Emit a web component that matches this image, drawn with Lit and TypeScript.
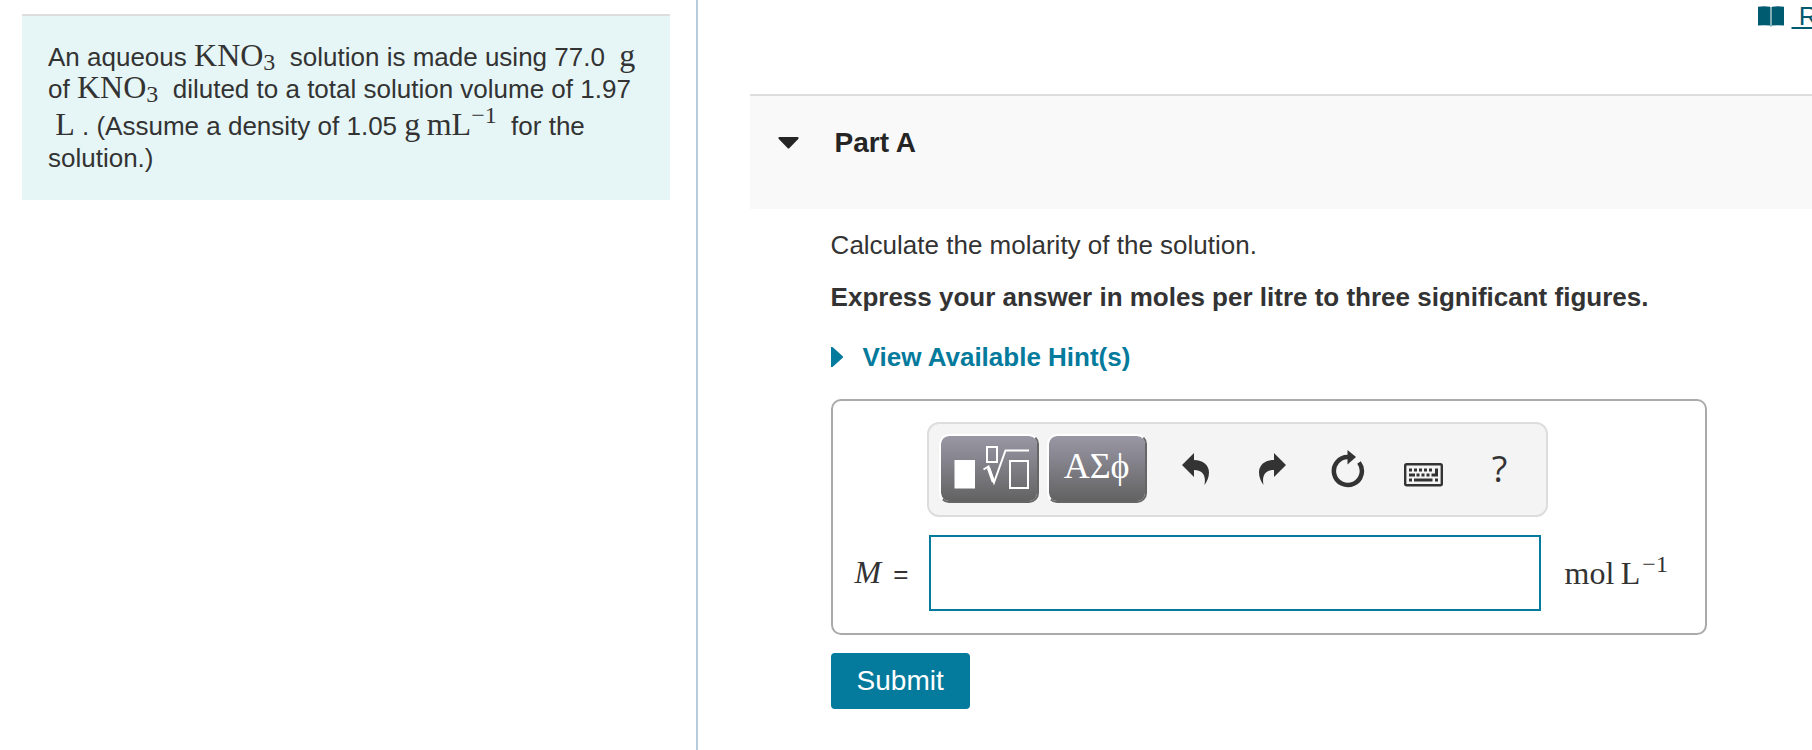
import { LitElement, html, css } from "lit";
import { customElement, state } from "lit/decorators.js";

@customElement("problem-statement")
class ProblemStatement extends LitElement {
  static styles = css`
    :host {
      display: block;
    }
    .card {
      margin: 0;
      padding: 25px 26px 26px;
      border-top: 2px solid #dddddd;
      background: #e6f6f6;
      color: #333333;
      font-size: 26px;
      line-height: 32px;
    }
    .text {
      margin: 0;
    }
    .math {
      font-family: "Liberation Serif", serif;
      font-size: 32px;
      line-height: 24px;
      white-space: nowrap;
    }
    sub,
    sup {
      font-size: 24px;
    }
    sub {
      line-height: 8px;
      vertical-align: -4px;
    }
    sup {
      line-height: 20px;
      vertical-align: 12px;
    }
  `;

  render() {
    const kno3 = html`<span class="math">KNO<sub>3</sub></span>`;
    return html`
      <section class="card">
        <p class="text">
          An aqueous ${kno3}&nbsp; solution is made using 77.0&nbsp;
          <span class="math">g</span> of ${kno3}&nbsp; diluted to a total
          solution volume of 1.97 &nbsp;<span class="math">L</span>&nbsp;.
          (Assume a density of 1.05
          <span class="math">g&#8201;mL<sup>−1</sup></span>&nbsp; for the
          solution.)
        </p>
      </section>
    `;
  }
}

@customElement("math-toolbar")
class MathToolbar extends LitElement {
  static styles = css`
    :host {
      display: block;
    }
    .bar {
      display: inline-flex;
      align-items: center;
      box-sizing: border-box;
      padding: 10px 8px 12px 10px;
      border: 2px solid #dddddd;
      border-radius: 12px;
      background: #f4f4f4;
    }
    button {
      display: flex;
      align-items: center;
      justify-content: center;
      box-sizing: border-box;
      height: 69px;
      padding: 0;
      border: 0;
      background: none;
      color: #333333;
      cursor: pointer;
    }
    .key {
      width: 100px;
      margin-right: 8px;
      border: 2px solid #666666;
      border-top-color: #ffffff;
      border-left-color: #ffffff;
      border-radius: 10px;
      background: linear-gradient(#9a97a5, #626262) padding-box;
      color: #ffffff;
    }
    .greek {
      padding-bottom: 6px;
      font: 36px/40px "Liberation Serif", serif;
    }
    .tool {
      width: 76px;
    }
    .key + .tool {
      margin-left: 3px;
    }
    .help {
      font: 36px/44px "Open Sans", "Noto Sans", sans-serif;
    }
    svg {
      display: block;
    }
  `;

  render() {
    return html`
      <div class="bar" role="toolbar" aria-label="Math tools">
        <button class="key" type="button" aria-label="Templates">
          <svg width="96" height="65" viewBox="0 0 96 65" fill="none" stroke="#fff" stroke-width="2">
            <rect x="13.500" y="24" width="20.500" height="28.500" fill="#fff" stroke="none" />
            <rect x="46" y="11" width="10" height="15" />
            <path d="M42.500 33.500l5-3 5.500 16 11.500-32h23.500" />
            <path d="M47.500 32l5 14" stroke-width="3.500" />
            <rect x="69" y="25" width="18" height="27" />
          </svg>
        </button>
        <button class="key greek" type="button" aria-label="Symbols">ΑΣϕ</button>
        <button class="tool" type="button" aria-label="Undo">
          <svg width="28" height="32" viewBox="0 0 28 32" fill="currentColor">
            <path d="M0 12L12 0v7C21 7 27 12 27 19.500c0 5-2 9-4.500 12.500C24.500 22 20 17 12 17v7z" />
          </svg>
        </button>
        <button class="tool" type="button" aria-label="Redo">
          <svg width="28" height="32" viewBox="0 0 28 32" fill="currentColor">
            <path d="M28 12L16 0v7C7 7 1 12 1 19.500c0 5 2 9 4.500 12.500C3.500 22 8 17 16 17v7z" />
          </svg>
        </button>
        <button class="tool" type="button" aria-label="Reset">
          <svg width="34" height="38" viewBox="0 0 34 38">
            <path d="M28 12.500A14 14 0 1 1 17 7" fill="none" stroke="currentColor" stroke-width="4.500" />
            <path d="M16.500 0l8.500 7L16.500 14.500z" fill="currentColor" />
          </svg>
        </button>
        <button class="tool" type="button" aria-label="Keyboard shortcuts">
          <svg width="39" height="36" viewBox="0 0 39 36" fill="currentColor">
            <rect x="1.200" y="13.200" width="36.600" height="21" rx="1.500" fill="none" stroke="currentColor" stroke-width="2.400" />
            <path d="M5 17.500h3v3H5zM10 17.500h3v3h-3zM15 17.500h3v3h-3zM20 17.500h3v3h-3zM25 17.500h3v3h-3z" />
            <path d="M5 22.500h6v3H5zM12.500 22.500h3v3h-3zM17.500 22.500h3v3h-3zM22.500 22.500h3v3h-3zM27.500 22.500H31v-5h3v8h-6.500z" />
            <path d="M5 27.500h3v3H5zM10 27.500h18.500v3H10zM31 27.500h3v3h-3z" />
          </svg>
        </button>
        <button class="tool help" type="button" aria-label="Help">?</button>
      </div>
    `;
  }
}

@customElement("app-root")
class AppRoot extends LitElement {
  static styles = css`
    :host {
      display: block;
      color: #333333;
      font: 26px/32px "Liberation Sans", Arial, sans-serif;
    }
    .page {
      display: flex;
      min-height: 100vh;
      overflow: hidden;
      background: #ffffff;
    }
    .left {
      flex: 0 0 auto;
      box-sizing: border-box;
      width: 38.5%;
      padding: 14px 26px 0 22px;
      border-right: 2px solid #b8cbdc;
    }
    .right {
      flex: 1 1 0;
      min-width: 0;
      padding-left: 52px;
    }
    /* The link row runs on past the window's right edge. */
    .links {
      display: flex;
      justify-content: flex-end;
      align-items: flex-start;
      gap: 8px;
      height: 94px;
      width: calc(100% + 72px);
    }
    .book {
      margin-top: 6px;
      color: #005a70;
    }
    .review {
      color: #005a70;
      text-decoration-thickness: 2px;
      text-underline-offset: 2px;
      white-space: pre;
    }
    .part {
      display: flex;
      align-items: flex-start;
      box-sizing: border-box;
      height: 115px;
      padding: 31px 28px;
      border-top: 2px solid #dddddd;
      background: #f9f9f9;
    }
    .toggle {
      display: flex;
      align-items: center;
      gap: 36px;
      padding: 0;
      border: 0;
      background: none;
      color: #252525;
      font: bold 28px/32px "Liberation Sans", Arial, sans-serif;
      cursor: pointer;
    }
    h2 {
      margin: 0;
      font-size: 28px;
    }
    .body {
      padding: 20px 40px 0 81px;
    }
    p {
      margin: 0 0 20px;
    }
    .strong {
      margin-bottom: 28px;
      font-weight: bold;
    }
    .hints {
      display: flex;
      align-items: center;
      gap: 20px;
      margin-bottom: 26px;
      padding: 0;
      border: 0;
      background: none;
      color: #047a9c;
      font: bold 26px/32px "Liberation Sans", Arial, sans-serif;
      cursor: pointer;
    }
    .answer {
      box-sizing: border-box;
      width: 100%;
      max-width: 876px;
      margin-bottom: 18px;
      padding: 21px 34px 22px 22px;
      border: 2px solid #aaaaaa;
      border-radius: 10px;
    }
    .tools {
      padding-left: 72px;
    }
    .row {
      display: flex;
      align-items: center;
      margin-top: 18px;
    }
    .label {
      display: flex;
      align-items: baseline;
      gap: 12px;
      flex: 0 0 74px;
      white-space: nowrap;
    }
    .math {
      font-family: "Liberation Serif", serif;
      font-size: 32px;
      white-space: nowrap;
    }
    .field {
      flex: 1 1 0;
      min-width: 0;
      box-sizing: border-box;
      height: 76px;
      padding: 0 12px;
      border: 2px solid #047a9c;
      border-radius: 0;
      background: #ffffff;
      color: #333333;
      font: 26px "Liberation Sans", Arial, sans-serif;
      outline: none;
    }
    .unit {
      flex: 0 0 130px;
      box-sizing: border-box;
      padding-left: 24px;
    }
    sup {
      margin-left: 2px;
      font-size: 24px;
      line-height: 0;
      vertical-align: 12px;
    }
    .submit {
      height: 56px;
      padding: 0 26px;
      border: 0;
      border-radius: 4px;
      background: #047a9c;
      color: #ffffff;
      font: 28px/32px "Liberation Sans", Arial, sans-serif;
      cursor: pointer;
    }
    svg {
      display: block;
      flex: none;
    }
  `;

  @state() private value = "";

  render() {
    return html`
      <main class="page">
        <div class="left"><problem-statement></problem-statement></div>
        <div class="right">
          <nav class="links">
            <svg class="book" width="26" height="21" viewBox="0 0 26 21" fill="currentColor">
              <path d="M0 .8Q6-.3 12 .8v18.700Q6 18.800 0 19.500zM14 .8q6-1.100 12 0v18.700q-6-.7-12 0z" />
              <path d="M12 1h2v19.500h-2z" opacity=".5" />
            </svg>
            <a class="review" href="#review"> Review</a>
          </nav>
          <div class="part">
            <button class="toggle" type="button" aria-expanded="true">
              <svg width="21" height="12" viewBox="0 0 21 12" fill="currentColor">
                <path d="M1.200 0h18.600q1.400.6.400 2L11.500 11q-1 1-2 0L.8 2Q-.2.600 1.200 0z" />
              </svg>
              <h2>Part A</h2>
            </button>
          </div>
          <div class="body">
            <p>Calculate the molarity of the solution.</p>
            <p class="strong">Express your answer in moles per litre to three significant figures.</p>
            <button class="hints" type="button" aria-expanded="false">
              <svg width="12" height="20" viewBox="0 0 12 20" fill="currentColor">
                <path d="M0 0h1.500l10 9q1 1 0 2l-10 9H0z" />
              </svg>
              View Available Hint(s)
            </button>
            <div class="answer">
              <math-toolbar class="tools"></math-toolbar>
              <div class="row">
                <label class="label" for="answer"><i class="math">M</i> =</label>
                <input
                  class="field"
                  id="answer"
                  type="text"
                  autocomplete="off"
                  .value=${this.value}
                  @input=${(e: Event) => (this.value = (e.target as HTMLInputElement).value)}
                />
                <span class="unit math">mol&#8201;L<sup>−1</sup></span>
              </div>
            </div>
            <button class="submit" type="button">Submit</button>
          </div>
        </div>
      </main>
    `;
  }
}
